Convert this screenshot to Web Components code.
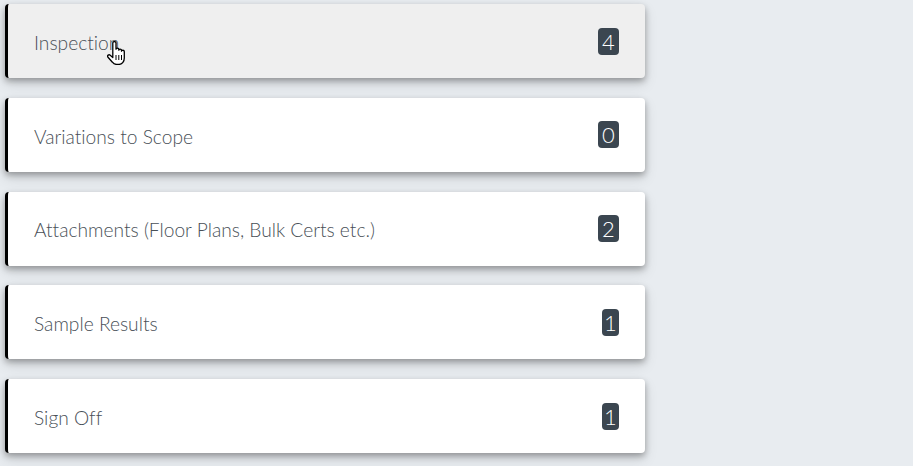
<!DOCTYPE html>
<html lang="en">
<head>
<meta charset="utf-8">
<title>Job sections</title>
<style>
  html, body { margin: 0; height: 100%; overflow: hidden; background: #e8ecf0; }
</style>
</head>
<body>
<section-list>
  <section-card count="4" hover>Inspection<hand-cursor slot="cursor"></hand-cursor></section-card>
  <section-card count="0">Variations to Scope</section-card>
  <section-card count="2">Attachments (Floor Plans, Bulk Certs etc.)</section-card>
  <section-card count="1">Sample Results</section-card>
  <section-card count="1">Sign Off</section-card>
</section-list>

<script>
class SectionList extends HTMLElement {
  constructor() {
    super();
    this.attachShadow({ mode: "open" });
    this.shadowRoot.innerHTML = `
    <style>
    :host {
      display: flex;
      flex-direction: column;
      gap: 19.75px;
      width: 640px;
      padding: 4px 0 0 5px;
    }
    </style>
    <slot></slot>`;
  }
}

class SectionCard extends HTMLElement {
  constructor() {
    super();
    this.attachShadow({ mode: "open" });
  }

  connectedCallback() {
    this.shadowRoot.innerHTML = `
    <style>
    :host {
      display: flex;
      align-items: center;
      justify-content: space-between;
      box-sizing: border-box;
      height: 74px;
      padding: 0 26px 0 26px;
      background: #fff;
      border-left: 3px solid #000;
      border-radius: 4px;
      box-shadow: 0 3px 6px rgba(0, 0, 0, .3), 0 6px 14px rgba(0, 0, 0, .12);
      color: #495057;
      font: 300 19.2px/1.2 "Lato", sans-serif;
      font-variant-ligatures: none;
    }
    :host([hover]) { background: #efefef; }
    .label { padding-top: 3px; position: relative; }
    .count {
      display: block;
      box-sizing: border-box;
      width: 21px;
      height: 27px;
      border-radius: 4px;
      background: #3b4650;
      color: #fff;
      font-size: 22px;
      line-height: 27px;
      text-align: center;
    }
    :host([count="1"]) .count { width: 17px; }
    </style>
    <span class="label"><slot></slot><slot name="cursor"></slot></span>
    <span class="count">${this.getAttribute("count")}</span>`;
  }
}

class HandCursor extends HTMLElement {
  constructor() {
    super();
    this.attachShadow({ mode: "open" });
    this.shadowRoot.innerHTML = `
    <style>
    :host { position: absolute; left: 73px; top: 13px; display: block; width: 18px; height: 24px; }
    svg { display: block; }
    </style>
    <svg width="18" height="24" viewBox="0 0 18 24">
      <path d="M5.8 2c0-1.9 3.2-1.9 3.2 0v6.2c0-1.5 2.8-1.5 2.8 0v1c0-1.4 2.7-1.4 2.7 0v1c0-1.3 2.8-1.3 2.8.3v6.5c0 3.4-2 6.4-5.2 6.4H9.6c-2 0-3.2-.9-4.2-2.2L.8 16c-.9-1.4 1-3 2.4-1.8l2.6 2.3z" fill="#fff" stroke="#000" stroke-width="1.3" stroke-linejoin="round"/>
      <path d="M9 14v5M11.8 14v5M14.5 14v5" stroke="#000" stroke-width="1"/>
    </svg>`;
  }
}

customElements.define("section-list", SectionList);
customElements.define("section-card", SectionCard);
customElements.define("hand-cursor", HandCursor);
</script>
</body>
</html>
